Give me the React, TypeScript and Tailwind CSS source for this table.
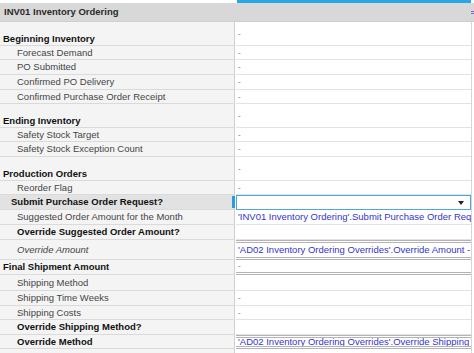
import React from 'react';

type Row = {
  label: string;
  h: number;
  indent?: 'none' | 'mid' | 'sub';
  style?: 'bold' | 'normal' | 'italic';
  tall?: boolean;
  value?: 'dash' | 'link' | 'select' | 'empty';
  link?: string;
  double?: 'y' | 'b' | 't';
};

const rows: Row[] = [
  { label: 'Beginning Inventory', h: 24, style: 'bold', tall: true, value: 'dash' },
  { label: 'Forecast Demand', h: 14, indent: 'sub', value: 'dash' },
  { label: 'PO Submitted', h: 15, indent: 'sub', value: 'dash' },
  { label: 'Confirmed PO Delivery', h: 15, indent: 'sub', value: 'dash' },
  { label: 'Confirmed Purchase Order Receipt', h: 14, indent: 'sub', value: 'dash' },
  { label: 'Ending Inventory', h: 24, style: 'bold', tall: true, value: 'dash' },
  { label: 'Safety Stock Target', h: 14, indent: 'sub', value: 'dash' },
  { label: 'Safety Stock Exception Count', h: 15, indent: 'sub', value: 'dash' },
  { label: 'Production Orders', h: 24, style: 'bold', tall: true, value: 'dash' },
  { label: 'Reorder Flag', h: 14, indent: 'sub', value: 'dash' },
  { label: 'Submit Purchase Order Request?', h: 15, indent: 'mid', style: 'bold', value: 'select' },
  {
    label: 'Suggested Order Amount for the Month',
    h: 15,
    indent: 'sub',
    value: 'link',
    link: "'INV01 Inventory Ordering'.Submit Purchase Order Request",
  },
  { label: 'Override Suggested Order Amount?', h: 15, indent: 'sub', style: 'bold', value: 'empty' },
  {
    label: 'Override Amount',
    h: 20,
    indent: 'sub',
    style: 'italic',
    value: 'link',
    link: "'AD02 Inventory Ordering Overrides'.Override Amount - Suggested",
    double: 'y',
  },
  { label: 'Final Shipment Amount', h: 15, style: 'bold', value: 'dash', double: 'b' },
  { label: 'Shipping Method', h: 16, indent: 'sub', value: 'empty' },
  { label: 'Shipping Time Weeks', h: 15, indent: 'sub', value: 'dash' },
  { label: 'Shipping Costs', h: 14, indent: 'sub', value: 'dash' },
  { label: 'Override Shipping Method?', h: 15, indent: 'sub', style: 'bold', value: 'empty' },
  {
    label: 'Override Method',
    h: 14,
    indent: 'sub',
    style: 'bold',
    value: 'link',
    link: "'AD02 Inventory Ordering Overrides'.Override Shipping Method",
    double: 't',
  },
];

function ValueCell({ row }: { row: Row }) {
  if (row.value === 'select') {
    return (
      <div className="flex-1 relative flex items-center border border-[#4ea6de] bg-white">
        <span className="absolute right-[6px] top-[5px] w-0 h-0 border-l-[3px] border-r-[3px] border-t-[4px] border-l-transparent border-r-transparent border-t-[#222]" />
      </div>
    );
  }
  let borders = 'border-b border-[#e2e2e2]';
  if (row.double === 'y') borders = 'border-y-[3px] border-double border-[#b4b4b4]';
  if (row.double === 'b') borders = 'border-b-[3px] border-double border-[#b4b4b4]';
  if (row.double === 't') borders = 'border-t-[3px] border-b-[3px] border-double border-[#b4b4b4]';
  return (
    <div className={`flex-1 min-w-0 flex items-center pl-[2px] bg-white overflow-hidden ${borders}`}>
      {row.value === 'dash' && <span className="text-[#5a5ac0] text-[8px] leading-none">-</span>}
      {row.value === 'link' && (
        <span className="text-[#3535c8] whitespace-nowrap leading-none">{row.link}</span>
      )}
    </div>
  );
}

export default function App() {
  return (
    <div
      className="w-[474px] h-[353px] bg-white overflow-hidden text-[9.5px] text-[#333]"
      style={{ fontFamily: '"Liberation Sans", Arial, sans-serif' }}
    >
      {/* top selection bar */}
      <div className="h-[3px] flex">
        <div className="w-[237px]" />
        <div className="w-[234px] bg-[#2aa6e2]" />
      </div>

      {/* header */}
      <div className="h-[19px] flex bg-[#d8d8d8] border-b border-[#cfcfcf]">
        <div className="w-[235px] flex items-center pl-[4px] font-bold text-[#2a2a2a]">INV01 Inventory Ordering</div>
        <div className="flex-1" />
        <div className="w-[3px] flex items-center">
          <div className="w-[3px] h-[3px] border-y border-[#8a5ad8]" />
        </div>
      </div>

      {rows.map((row, i) => {
        const indent = row.indent === 'sub' ? 'pl-[17px]' : row.indent === 'mid' ? 'pl-[11px]' : 'pl-[3px]';
        const weight =
          row.style === 'bold'
            ? 'font-bold text-[#111]'
            : row.style === 'italic'
            ? 'italic text-[#444]'
            : 'text-[#444]';
        const selected = row.value === 'select';
        return (
          <div key={i} className="flex" style={{ height: row.h }}>
            <div
              className={`w-[235px] shrink-0 flex ${row.tall ? 'items-end pb-[2px]' : 'items-center'} ${indent} ${weight} ${
                selected ? 'bg-[#e2e2e2]' : 'bg-[#f4f4f4]'
              } border-b border-[#dadada] border-r border-r-[#d0d0d0] relative whitespace-nowrap leading-none`}
            >
              {row.label}
              {selected && <span className="absolute right-[-1px] top-[1px] w-[3px] h-[12px] bg-[#2a9be0]" />}
            </div>
            <div className="w-[1px]" />
            <ValueCell row={row} />
            <div className="w-[3px] border-l border-[#d6d6d6] bg-white" />
          </div>
        );
      })}
      <div className="flex h-[4px]">
        <div className="w-[235px] bg-[#f4f4f4] border-r border-[#d0d0d0]" />
        <div className="flex-1 bg-white" />
        <div className="w-[3px] border-l border-[#d6d6d6]" />
      </div>
    </div>
  );
}
